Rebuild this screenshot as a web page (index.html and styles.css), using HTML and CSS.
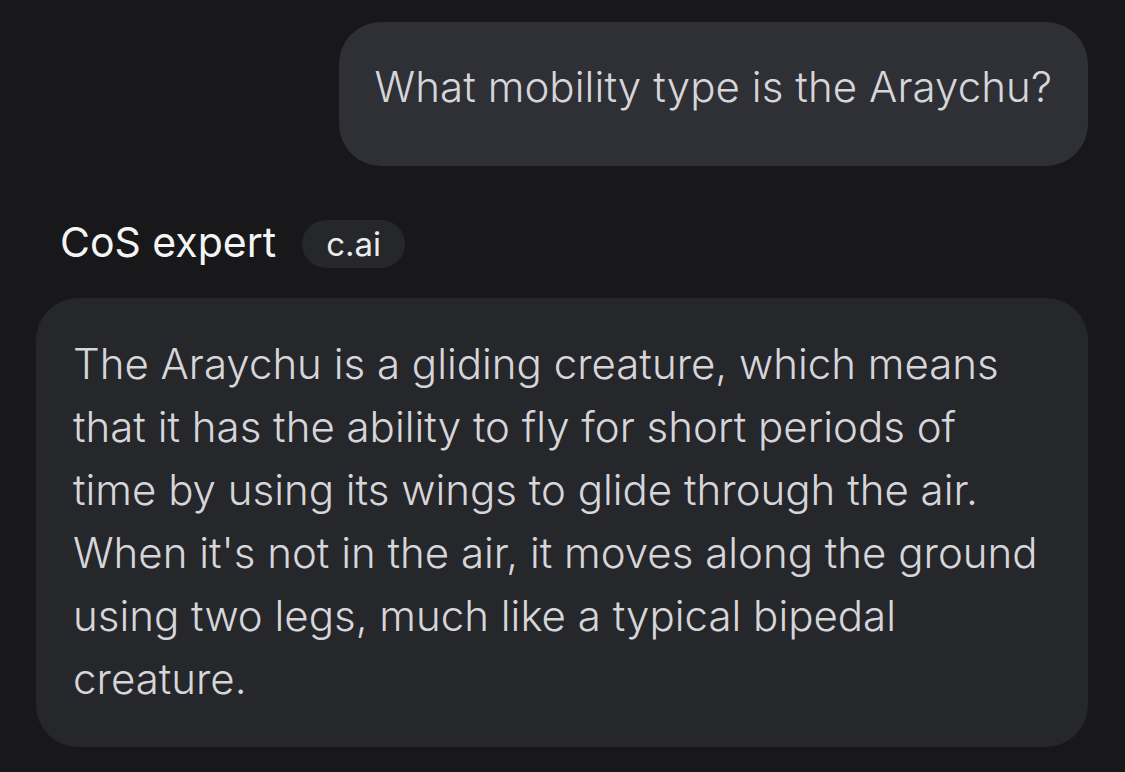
FILE: index.html
```html
<!DOCTYPE html>
<html lang="en">
<head>
<meta charset="utf-8">
<link rel="stylesheet" href="styles.css">
</head>
<body>
<main class="chat">
  <div class="msg-user">
    <div class="bubble-user">What mobility type is the Araychu?</div>
  </div>
  <div class="bot-head">
    <span class="bot-name">CoS expert</span>
    <span class="badge">c.ai</span>
  </div>
  <div class="bubble-bot">The Araychu is a gliding creature, which means that it has the ability to fly for short periods of time by using its wings to glide through the air. When it's not in the air, it moves along the ground using two legs, much like a typical bipedal creature.</div>
</main>
</body>
</html>
```
FILE: styles.css
```css
html, body {
  margin: 0;
  padding: 0;
  background: #18181b;
}
body {
  font-family: "Inter", "Liberation Sans", sans-serif;
  width: 1125px;
  height: 772px;
  overflow: hidden;
}
.chat {
  display: flex;
  flex-direction: column;
  padding: 22px 37px 0 36px;
}
.msg-user {
  display: flex;
  justify-content: flex-end;
}
.bubble-user {
  background: #2f3035;
  color: #d6d6da;
  font-size: 42px;
  font-weight: 300;
  line-height: 63px;
  letter-spacing: 0.08px;
  padding: 33px 36px 48px 36px;
  border-radius: 42px;
}
.bot-head {
  display: flex;
  align-items: center;
  gap: 26px;
  margin-top: 54px;
  padding-left: 24px;
  height: 48px;
}
.bot-name {
  color: #f4f4f5;
  font-size: 41px;
  font-weight: 400;
  position: relative;
  top: -2px;
}
.badge {
  background: #26272b;
  color: #ececee;
  font-size: 33px;
  font-weight: 400;
  height: 48px;
  line-height: 48px;
  padding: 0 24px;
  border-radius: 24px;
}
.bubble-bot {
  margin-top: 30px;
  background: #26272b;
  color: #d6d6da;
  font-size: 42px;
  font-weight: 300;
  line-height: 63px;
  padding: 34px 37px 37px 37px;
  border-radius: 42px;
}
```
